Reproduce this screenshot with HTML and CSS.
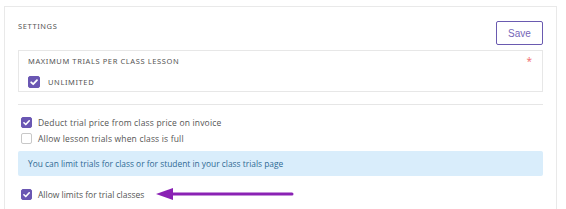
FILE: index.html
```html
<!DOCTYPE html>
<html>
<head>
<meta charset="utf-8">
<link rel="stylesheet" href="styles.css">
</head>
<body>
<div class="card">
  <div class="card-head">
    <div class="title">SETTINGS</div>
    <button class="save">Save</button>
  </div>
  <div class="box">
    <div class="box-head">
      <span class="label">MAXIMUM TRIALS PER CLASS LESSON</span>
      <span class="req">*</span>
    </div>
    <div class="box-row">
      <span class="cb on"><svg viewBox="0 0 12 12" width="12" height="12"><path d="M3.2 6.3l2 1.9 3.8-4.1" fill="none" stroke="#fff" stroke-width="1.8" stroke-linecap="round" stroke-linejoin="round"/></svg></span>
      <span class="label">UNLIMITED</span>
    </div>
  </div>
  <div class="sep"></div>
  <div class="opts">
    <div class="opt"><span class="cb sm on"><svg viewBox="0 0 12 12" width="11" height="11"><path d="M3.2 6.3l2 1.9 3.8-4.1" fill="none" stroke="#fff" stroke-width="1.8" stroke-linecap="round" stroke-linejoin="round"/></svg></span><span class="wide">Deduct trial price from class price on invoice</span></div>
    <div class="opt"><span class="cb sm"></span><span class="wide">Allow lesson trials when class is full</span></div>
  </div>
  <div class="info">You can limit trials for class or for student in your class trials page</div>
  <div class="opt last"><span class="cb sm on"><svg viewBox="0 0 12 12" width="11" height="11"><path d="M3.2 6.3l2 1.9 3.8-4.1" fill="none" stroke="#fff" stroke-width="1.8" stroke-linecap="round" stroke-linejoin="round"/></svg></span><span>Allow limits for trial classes</span>
    <svg class="arrow" width="140" height="14" viewBox="0 0 140 14"><path d="M15 7H136" stroke="#8a22b4" stroke-width="3" stroke-linecap="round"/><path d="M0 7L17 1V13Z" fill="#8a22b4"/></svg>
  </div>
</div>
</body>
</html>
```
FILE: styles.css
```css
html, body { margin: 0; padding: 0; background: #fff; }
body { padding: 6px 9px 0 4px; font-family: "Open Sans", sans-serif; }
.card {
  border: 1px solid #e9e9e9;
  border-bottom: none;
  padding: 14px 13px 0 13px;
  height: 210px;
  box-sizing: border-box;
}
.card-head { display: flex; justify-content: space-between; align-items: flex-start; height: 24px; }
.title { font-family: "Noto Sans", sans-serif; font-size: 7.5px; letter-spacing: 0.6px; color: #555; padding-top: 0px; }
.save {
  width: 47px; height: 24px; box-sizing: border-box;
  border: 1px solid #6a5ab0; border-radius: 2px; background: #fff;
  color: #7566b8; font-family: "Liberation Sans", sans-serif; font-size: 10px; padding: 0;
}
.box { margin-top: 5px; border: 1px solid #e7e7e7; height: 42px; box-sizing: border-box; padding: 4px 9px 0 9px; }
.box-head { display: flex; justify-content: space-between; height: 12px; align-items: center; }
.label { font-family: "Noto Sans", sans-serif; font-size: 7.5px; letter-spacing: 0.6px; color: #555; }
.req { color: #f06a6a; font-size: 10px; margin-right: 1px; line-height: 1; }
.box-row { display: flex; align-items: center; gap: 8px; margin-top: 9px; }
.cb { width: 12px; height: 12px; box-sizing: border-box; border: 1px solid #c8c8c8; border-radius: 2px; display: inline-flex; flex: none; }
.cb.sm { width: 11px; height: 11px; }
.cb.on { background: #6a57b3; border-color: #6a57b3; }
.cb svg { margin: -1px; }
.sep { margin-top: 12px; border-top: 1px solid #e6e6e6; }
.opts { padding: 9px 0 0 3px; }
.opt { display: flex; align-items: center; gap: 6px; font-size: 8.5px; color: #555; height: 16px; }
.wide { letter-spacing: 0.18px; }
.info {
  margin-top: 5px; height: 25px; background: #d9edfb; border-radius: 2px;
  color: #2f6a94; font-size: 8.4px; display: flex; align-items: center; padding-left: 10px;
}
.opt.last { margin-top: 10px; padding-left: 3px; }
.arrow { margin-left: 6px; }
```
